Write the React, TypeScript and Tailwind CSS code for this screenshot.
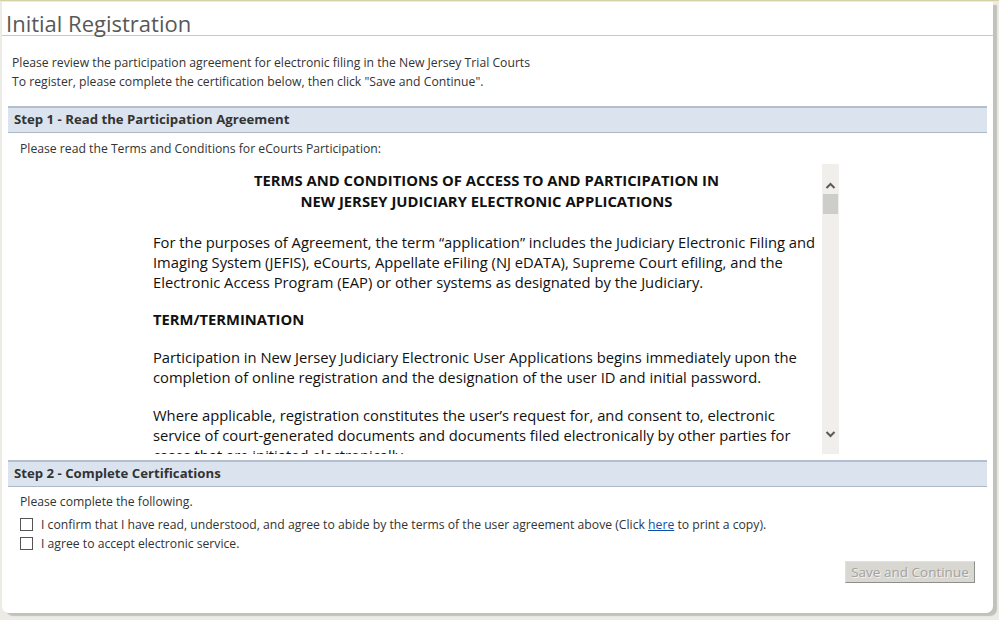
import React from "react";

const font = { fontFamily: '"Open Sans", "Liberation Sans", Arial, sans-serif' };

function StepHeader({ title }: { title: string }) {
  return (
    <div className="mx-[6px] h-[27px] border-t-2 border-b border-t-[#b3bfcc] border-b-[#aeb9c6] bg-[#dbe4ee] pl-[6px] flex items-center text-[13.2px] font-bold text-[#333]">
      {title}
    </div>
  );
}

function Checkbox() {
  return <span className="inline-block w-[13px] h-[13px] border border-[#555] bg-white shrink-0" />;
}

function ScrollBar() {
  return (
    <div className="w-[17px] shrink-0 bg-[#f0efec] flex flex-col items-center">
      <svg width="11" height="7" viewBox="0 0 11 7" className="mt-[18px]">
        <path d="M1.5 6 L5.5 2 L9.5 6" stroke="#5a5a5a" strokeWidth="2" fill="none" />
      </svg>
      <div className="mt-[5px] w-[15px] h-[20px] bg-[#cdcdc9]" />
      <div className="flex-1" />
      <svg width="11" height="7" viewBox="0 0 11 7" className="mb-[16px]">
        <path d="M1.5 1 L5.5 5 L9.5 1" stroke="#5a5a5a" strokeWidth="2" fill="none" />
      </svg>
    </div>
  );
}

function Lines({ lines, className = "" }: { lines: string[]; className?: string }) {
  return (
    <p className={"whitespace-nowrap " + className}>
      {lines.map((l, i) => (
        <React.Fragment key={i}>
          {l}
          {i < lines.length - 1 && <br />}
        </React.Fragment>
      ))}
    </p>
  );
}

export default function App() {
  return (
    <div className="w-[999px] h-[620px] bg-[#ecebe6] border-t border-t-[#d6d1a9] overflow-hidden" style={font}>
      <div className="ml-[2px] mt-[1px] w-[991px] h-[611px] bg-white rounded-b-[7px] shadow-[4px_3px_1px_#c2c2bd]">
        <div className="h-[34px] border-b border-b-[#c3cad2] pl-[4px] pt-[8px] text-[22px] leading-[26px] text-[#585858]">
          Initial Registration
        </div>
        <div className="pl-[10px] pt-[17px] text-[12.2px] leading-[19px] text-[#333]">
          <p>Please review the participation agreement for electronic filing in the New Jersey Trial Courts</p>
          <p>To register, please complete the certification below, then click "Save and Continue".</p>
        </div>
        <div className="mt-[15px]">
          <StepHeader title="Step 1 - Read the Participation Agreement" />
        </div>
        <p className="pl-[18px] pt-[8px] text-[12.2px] leading-[15px] text-[#333]">
          Please read the Terms and Conditions for eCourts Participation:
        </p>
        <div className="mt-[8px] ml-[18px] w-[819px] h-[290px] flex">
          <div className="flex-1 overflow-hidden pl-[133px] pr-[2px] pt-[6px] text-[14.75px] leading-[20px] text-[#111]">
            <div className="text-center font-bold text-[14.8px] leading-[21px]">
              TERMS AND CONDITIONS OF ACCESS TO AND PARTICIPATION IN
              <br />
              NEW JERSEY JUDICIARY ELECTRONIC APPLICATIONS
            </div>
            <Lines
              className="mt-[20px]"
              lines={[
                "For the purposes of Agreement, the term “application” includes the Judiciary Electronic Filing and",
                "Imaging System (JEFIS), eCourts, Appellate eFiling (NJ eDATA), Supreme Court efiling, and the",
                "Electronic Access Program (EAP) or other systems as designated by the Judiciary.",
              ]}
            />
            <p className="mt-[17px] font-bold">TERM/TERMINATION</p>
            <Lines
              className="mt-[18px]"
              lines={[
                "Participation in New Jersey Judiciary Electronic User Applications begins immediately upon the",
                "completion of online registration and the designation of the user ID and initial password.",
              ]}
            />
            <Lines
              className="mt-[18px]"
              lines={[
                "Where applicable, registration constitutes the user’s request for, and consent to, electronic",
                "service of court-generated documents and documents filed electronically by other parties for",
                "cases that are initiated electronically.",
              ]}
            />
          </div>
          <ScrollBar />
        </div>
        <div className="mt-[6px]">
          <StepHeader title="Step 2 - Complete Certifications" />
        </div>
        <div className="pl-[18px] pt-[7px] text-[12.2px] text-[#333]">
          <p className="leading-[15px]">Please complete the following.</p>
          <label className="mt-[6px] flex items-center gap-[8px] leading-[19px]">
            <Checkbox />
            <span>
              I confirm that I have read, understood, and agree to abide by the terms of the user agreement above (Click{" "}
              <a className="text-[#0b4fa8] underline">here</a> to print a copy).
            </span>
          </label>
          <label className="flex items-center gap-[8px] leading-[19px]">
            <Checkbox />
            <span>I agree to accept electronic service.</span>
          </label>
        </div>
        <div className="flex justify-end pr-[18px] mt-[8px]">
          <button
            disabled
            className="w-[130px] h-[22px] border border-t-[#e0e0dc] border-l-[#e0e0dc] border-r-[#8e8e8a] border-b-[#8e8e8a] bg-[#d8d7d2] text-[13.5px] text-[#a3a3a0] [text-shadow:1px_1px_0_#f2f2f0]"
          >
            Save and Continue
          </button>
        </div>
      </div>
    </div>
  );
}
